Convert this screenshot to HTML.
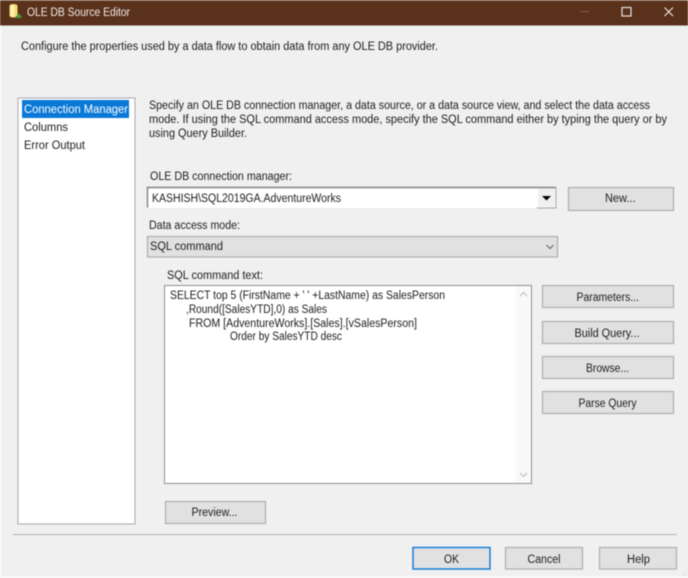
<!DOCTYPE html>
<html><head><meta charset="utf-8"><title>OLE DB Source Editor</title>
<style>
html,body{margin:0;padding:0;width:688px;height:578px;overflow:hidden;background:#f0f0f0}
svg{display:block;filter:blur(.4px)}
text{font-family:"Liberation Sans",sans-serif;font-size:11.5px;fill:#1c1c1c}
</style></head><body>
<svg width="688" height="578" viewBox="0 0 688 578" xmlns="http://www.w3.org/2000/svg">
<rect width="688" height="578" fill="#f0f0f0"/>
<rect x="0" y="0" width="1.5" height="578" fill="#fafafa"/>
<rect x="0" y="576" width="688" height="2" fill="#fafafa"/>
<!-- title bar -->
<rect width="688" height="25.5" fill="#5a311b"/>
<rect width="688" height="1" fill="#8a6a58"/>
<path d="M9.5 6 Q9.5 4 13.5 4 Q17.5 4 17.5 6 V15.5 Q17.5 17.5 13.5 17.5 Q9.5 17.5 9.5 15.5Z" fill="#f3dc6e"/>
<path d="M10.5 6 Q10.5 5 13 5 Q14.5 5 14.5 6 V15.5 Q14.5 16.5 12.5 16.5 Q10.5 16.5 10.5 15.5Z" fill="#fdf2b4"/>
<path d="M15.5 17 L18.5 13.5 L22 17 L18.5 18.5Z" fill="#4c9a3c"/>
<text x="27" y="16" textLength="103" lengthAdjust="spacingAndGlyphs" style="fill:#f2ece8">OLE DB Source Editor</text>
<rect x="580" y="11" width="9" height="1" fill="#7d5c4a"/>
<rect x="622" y="7.5" width="9" height="8.5" fill="none" stroke="#e8e2de" stroke-width="1.2"/>
<path d="M664.5 7.5 L673 16 M673 7.5 L664.5 16" stroke="#eee8e4" stroke-width="1.1" fill="none"/>
<!-- header -->
<text x="21" y="50" textLength="417" lengthAdjust="spacingAndGlyphs">Configure the properties used by a data flow to obtain data from any OLE DB provider.</text>
<!-- list -->
<rect x="18" y="98" width="117" height="426" fill="#fff" stroke="#a8a8b0" stroke-width="1"/>
<rect x="22" y="100" width="107" height="18" fill="#0a78d7"/>
<text x="24" y="113" textLength="104" lengthAdjust="spacingAndGlyphs" style="fill:#fff">Connection Manager</text>
<text x="24" y="131" textLength="44" lengthAdjust="spacingAndGlyphs">Columns</text>
<text x="24" y="149" textLength="61" lengthAdjust="spacingAndGlyphs">Error Output</text>
<!-- description -->
<text x="149" y="109" textLength="501" lengthAdjust="spacingAndGlyphs">Specify an OLE DB connection manager, a data source, or a data source view, and select the data access</text>
<text x="149" y="123" textLength="518" lengthAdjust="spacingAndGlyphs">mode. If using the SQL command access mode, specify the SQL command either by typing the query or by</text>
<text x="149" y="137" textLength="98" lengthAdjust="spacingAndGlyphs">using Query Builder.</text>
<!-- connection manager -->
<text x="150" y="180" textLength="142" lengthAdjust="spacingAndGlyphs">OLE DB connection manager:</text>
<rect x="147" y="187" width="410" height="21" fill="#fff"/>
<path d="M147.5 207.5 V187.5 H556" fill="none" stroke="#808080" stroke-width="1.4"/>
<path d="M556 187 V208 H537" fill="none" stroke="#a0a0a0" stroke-width="1"/>
<rect x="538" y="188.5" width="17" height="18.5" fill="#f0f0f0"/>
<path d="M542 196 H551 L546.5 200.5Z" fill="#000"/>
<text x="152" y="202" textLength="189" lengthAdjust="spacingAndGlyphs">KASHISH\SQL2019GA.AdventureWorks</text>
<!-- buttons group -->
<g fill="#e1e1e1" stroke="#adadad" stroke-width="1.2">
<rect x="568.5" y="187.5" width="105" height="23"/>
<rect x="542.5" y="285.5" width="131" height="22"/>
<rect x="542.5" y="321.5" width="131" height="22"/>
<rect x="542.5" y="356.5" width="131" height="22"/>
<rect x="542.5" y="391.5" width="131" height="22"/>
<rect x="165.5" y="501.5" width="100" height="22"/>
<rect x="505.5" y="547.5" width="77" height="21.5"/>
<rect x="599.5" y="547.5" width="77" height="21.5"/>
</g>
<rect x="413" y="547.5" width="77" height="21.5" fill="#e1e1e1" stroke="#0a78d7" stroke-width="1.4"/>
<text x="605" y="202" textLength="30.500" lengthAdjust="spacingAndGlyphs">New...</text>
<text x="576.500" y="301" textLength="62.500" lengthAdjust="spacingAndGlyphs">Parameters...</text>
<text x="574.500" y="337" textLength="65" lengthAdjust="spacingAndGlyphs">Build Query...</text>
<text x="586" y="372" textLength="43" lengthAdjust="spacingAndGlyphs">Browse...</text>
<text x="578.500" y="407" textLength="58" lengthAdjust="spacingAndGlyphs">Parse Query</text>
<text x="191.500" y="516" textLength="46" lengthAdjust="spacingAndGlyphs">Preview...</text>
<text x="444" y="563" textLength="15" lengthAdjust="spacingAndGlyphs">OK</text>
<text x="527.500" y="563" textLength="33" lengthAdjust="spacingAndGlyphs">Cancel</text>
<text x="627" y="563" textLength="23" lengthAdjust="spacingAndGlyphs">Help</text>
<!-- data access -->
<text x="149" y="229" textLength="91" lengthAdjust="spacingAndGlyphs">Data access mode:</text>
<rect x="147.5" y="236.5" width="410" height="20.5" fill="#e1e1e1" stroke="#adadad" stroke-width="1.2"/>
<text x="150" y="250" textLength="73" lengthAdjust="spacingAndGlyphs">SQL command</text>
<path d="M546.5 245 L550 248.5 L553.5 245" fill="none" stroke="#606060" stroke-width="1"/>
<!-- SQL -->
<text x="167" y="279" textLength="96" lengthAdjust="spacingAndGlyphs">SQL command text:</text>
<rect x="164.5" y="285.5" width="367" height="198" fill="#fff" stroke="#8f8f8f" stroke-width="1"/>
<rect x="516" y="286" width="15" height="197" fill="#f9f9f9"/>
<path d="M520 296 L523.5 292.5 L527 296" fill="none" stroke="#b8b8b8" stroke-width="1"/>
<path d="M520 473 L523.5 476.5 L527 473" fill="none" stroke="#b8b8b8" stroke-width="1"/>
<text x="170" y="299" textLength="275" lengthAdjust="spacingAndGlyphs">SELECT top 5 (FirstName + ' ' +LastName) as SalesPerson</text>
<text x="186" y="313" textLength="141" lengthAdjust="spacingAndGlyphs">,Round([SalesYTD],0) as Sales</text>
<text x="189" y="327" textLength="228" lengthAdjust="spacingAndGlyphs">FROM [AdventureWorks].[Sales].[vSalesPerson]</text>
<text x="230" y="340" textLength="112" lengthAdjust="spacingAndGlyphs">Order by SalesYTD desc</text>
<!-- separator -->
<rect x="13" y="534" width="664" height="1" fill="#b4b4b4"/>
<!-- grip -->
<g fill="#c4c4c4"><rect x="685" y="572" width="1" height="1"/><rect x="682" y="575" width="1" height="1"/><rect x="685" y="575" width="1" height="1"/></g>
</svg>
</body></html>
